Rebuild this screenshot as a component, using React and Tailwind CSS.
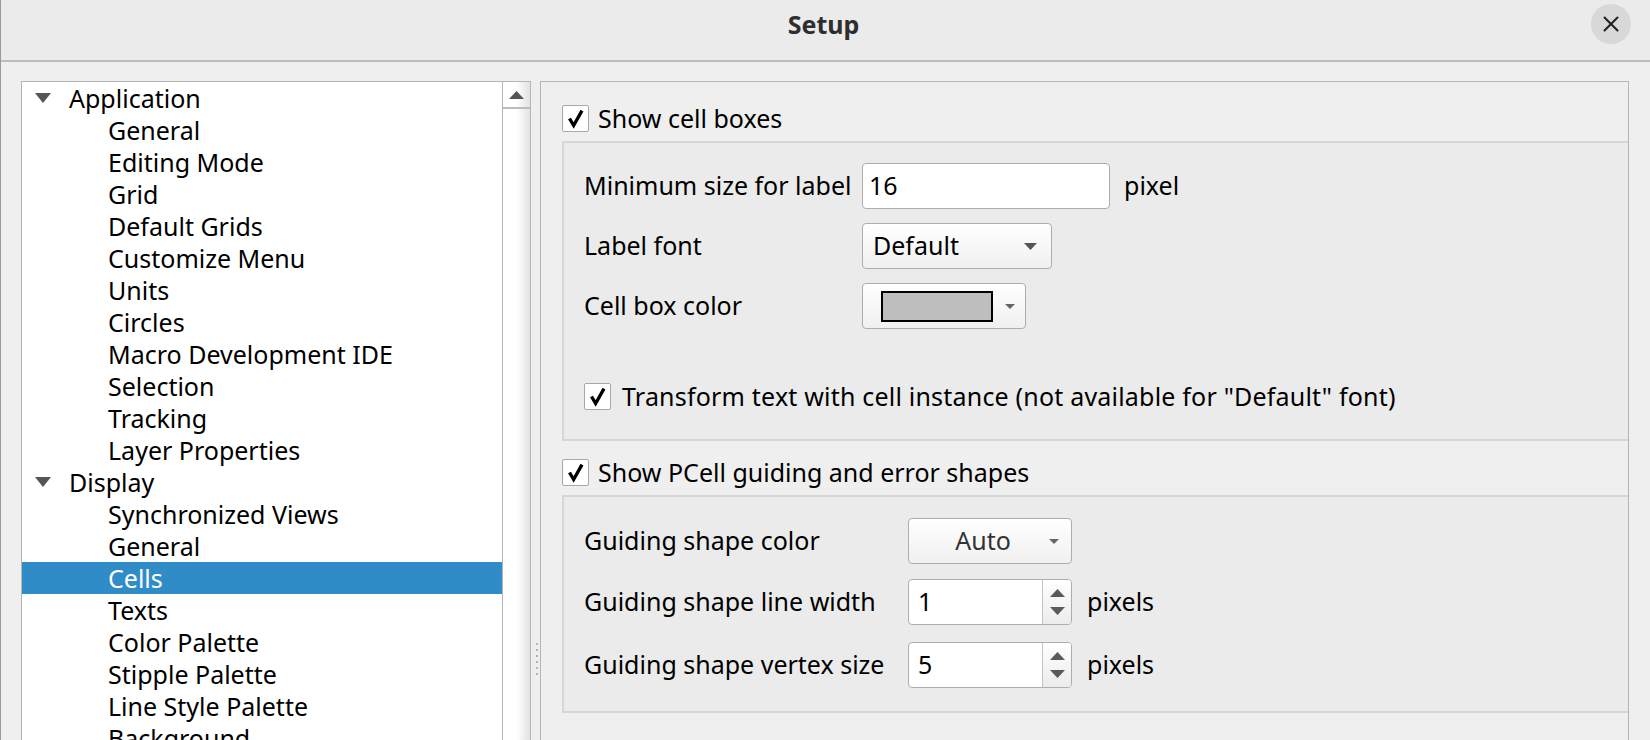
import { X } from 'lucide-react';

const tree = [
  { label: 'Application', parent: true },
  { label: 'General' },
  { label: 'Editing Mode' },
  { label: 'Grid' },
  { label: 'Default Grids' },
  { label: 'Customize Menu' },
  { label: 'Units' },
  { label: 'Circles' },
  { label: 'Macro Development IDE' },
  { label: 'Selection' },
  { label: 'Tracking' },
  { label: 'Layer Properties' },
  { label: 'Display', parent: true },
  { label: 'Synchronized Views' },
  { label: 'General' },
  { label: 'Cells', selected: true },
  { label: 'Texts' },
  { label: 'Color Palette' },
  { label: 'Stipple Palette' },
  { label: 'Line Style Palette' },
  { label: 'Background' },
];

const Check = ({ className = '' }) => (
  <div className={`w-[27px] h-[27px] shrink-0 bg-white border border-[#a8a8a8] rounded-[2px] flex items-center justify-center ${className}`}>
    <svg width="27" height="27" viewBox="0 0 27 27">
      <path d="M7 13.5 L11.5 21 L20.5 5" fill="none" stroke="#000" strokeWidth="3.6" strokeLinejoin="miter" strokeLinecap="butt" />
    </svg>
  </div>
);

const Arrow = ({ w, h, color = '#555' }) => (
  <svg width={w} height={h} viewBox={`0 0 ${w} ${h}`}>
    <polygon points={`0,0 ${w},0 ${w / 2},${h}`} fill={color} />
  </svg>
);

const UpArrow = ({ w, h, color = '#5a5a5a' }) => (
  <svg width={w} height={h} viewBox={`0 0 ${w} ${h}`}>
    <polygon points={`0,${h} ${w},${h} ${w / 2},0`} fill={color} />
  </svg>
);

const Spin = ({ value }) => (
  <div className="w-[164px] h-[46px] flex border border-[#adadad] rounded-[4px] overflow-hidden bg-white">
    <div className="flex-1 pl-[9px] flex items-center">{value}</div>
    <div className="w-[29px] border-l border-[#c4c4c4] bg-gradient-to-b from-white to-[#ececec] flex flex-col items-center justify-center gap-[10px]">
      <UpArrow w={15} h={8} />
      <Arrow w={15} h={8} color="#5a5a5a" />
    </div>
  </div>
);

const App = () => {
  return (
    <div className="w-[1650px] h-[740px] overflow-hidden bg-[#efefef] flex flex-col font-['Noto_Sans',sans-serif] text-[25px] text-black border-l border-[#9a9a9a]">
      {/* title bar */}
      <div className="h-[62px] shrink-0 bg-[#ebebeb] border-b-2 border-[#bdbdbd] flex items-start relative">
        <div className="flex-1 text-center pt-[6px] font-bold text-[#2e2e2e] leading-[36px] pr-[4px]">Setup</div>
        <div className="absolute right-[19px] top-[4px] w-[40px] h-[40px] rounded-full bg-[#d8d8d8] flex items-center justify-center">
          <X size={26} strokeWidth={1.9} color="#222" />
        </div>
      </div>

      <div className="flex flex-1 pt-[19px] pl-[20px] min-h-0">
        {/* tree */}
        <div className="w-[510px] h-[720px] shrink-0 bg-white border border-[#b6b6b6] flex">
          <div className="flex-1">
            {tree.map((item, i) => (
              <div
                key={i}
                className={`h-[32px] leading-[32px] flex items-center whitespace-nowrap ${item.selected ? 'bg-[#308cc6] text-white' : ''}`}
              >
                {item.parent ? (
                  <>
                    <div className="ml-[13px] w-[16px] flex">
                      <Arrow w={16} h={10} color="#555" />
                    </div>
                    <span className="ml-[18px]">{item.label}</span>
                  </>
                ) : (
                  <span className="ml-[86px]">{item.label}</span>
                )}
              </div>
            ))}
          </div>
          <div className="w-[28px] border-l border-[#b6b6b6] bg-gradient-to-r from-white via-white to-[#e2e2e2] flex flex-col">
            <div className="h-[27px] border-b-2 border-[#bcbcbc] flex items-center justify-center">
              <UpArrow w={15} h={8} color="#555" />
            </div>
          </div>
        </div>

        {/* splitter */}
        <div className="w-[9px] shrink-0 flex flex-col items-center pt-[562px] gap-[4px] pl-[3px]">
          {[0, 1, 2, 3, 4, 5].map((d) => (
            <div key={d} className="w-[2px] h-[2px] bg-[#b4b4b4]" />
          ))}
        </div>

        {/* settings page */}
        <div className="w-[1089px] h-[720px] shrink-0 border border-[#b6b6b6] bg-[#efefef] pt-[23px] pl-[21px]">
          <div className="flex items-center h-[27px]">
            <Check />
            <span className="ml-[9px]">Show cell boxes</span>
          </div>
          <div className="mt-[9px] bg-[#ebebeb] border-t-2 border-l-2 border-b-2 border-[#d6d6d6] pt-[20px] pl-[20px] pb-[29px]">
            <div className="flex items-center h-[46px]">
              <div className="w-[278px]">Minimum size for label</div>
              <div className="w-[248px] h-[46px] bg-white border border-[#adadad] rounded-[4px] pl-[6px] flex items-center">16</div>
              <span className="ml-[14px]">pixel</span>
            </div>
            <div className="flex items-center h-[46px] mt-[14px]">
              <div className="w-[278px]">Label font</div>
              <div className="w-[190px] h-[46px] border border-[#adadad] rounded-[4px] bg-gradient-to-b from-white to-[#f0f0f0] pl-[10px] pr-[14px] flex items-center justify-between">
                <span>Default</span>
                <Arrow w={13} h={7} color="#555" />
              </div>
            </div>
            <div className="flex items-center h-[46px] mt-[14px]">
              <div className="w-[278px]">Cell box color</div>
              <div className="w-[164px] h-[46px] border border-[#adadad] rounded-[4px] bg-gradient-to-b from-white to-[#f0f0f0] pl-[18px] pr-[10px] flex items-center justify-between">
                <div className="w-[112px] h-[31px] bg-[#bebebe] border-2 border-black" />
                <Arrow w={10} h={5} color="#666" />
              </div>
            </div>
            <div className="flex items-center h-[27px] mt-[54px]">
              <Check />
              <span className="ml-[11px] tracking-[0.2px]">Transform text with cell instance (not available for "Default" font)</span>
            </div>
          </div>

          <div className="flex items-center h-[27px] mt-[18px]">
            <Check />
            <span className="ml-[9px]">Show PCell guiding and error shapes</span>
          </div>
          <div className="mt-[9px] bg-[#ebebeb] border-t-2 border-l-2 border-b-2 border-[#d6d6d6] pt-[21px] pl-[20px] pb-[23px]">
            <div className="flex items-center h-[46px]">
              <div className="w-[324px]">Guiding shape color</div>
              <div className="w-[164px] h-[46px] border border-[#adadad] rounded-[4px] bg-gradient-to-b from-white to-[#f0f0f0] pr-[12px] flex items-center">
                <span className="flex-1 text-center pl-[8px] text-[#333]">Auto</span>
                <Arrow w={10} h={5} color="#666" />
              </div>
            </div>
            <div className="flex items-center h-[46px] mt-[15px]">
              <div className="w-[324px]">Guiding shape line width</div>
              <Spin value="1" />
              <span className="ml-[15px]">pixels</span>
            </div>
            <div className="flex items-center h-[46px] mt-[17px]">
              <div className="w-[324px]">Guiding shape vertex size</div>
              <Spin value="5" />
              <span className="ml-[15px]">pixels</span>
            </div>
          </div>
        </div>
      </div>
    </div>
  );
};

export default App;
